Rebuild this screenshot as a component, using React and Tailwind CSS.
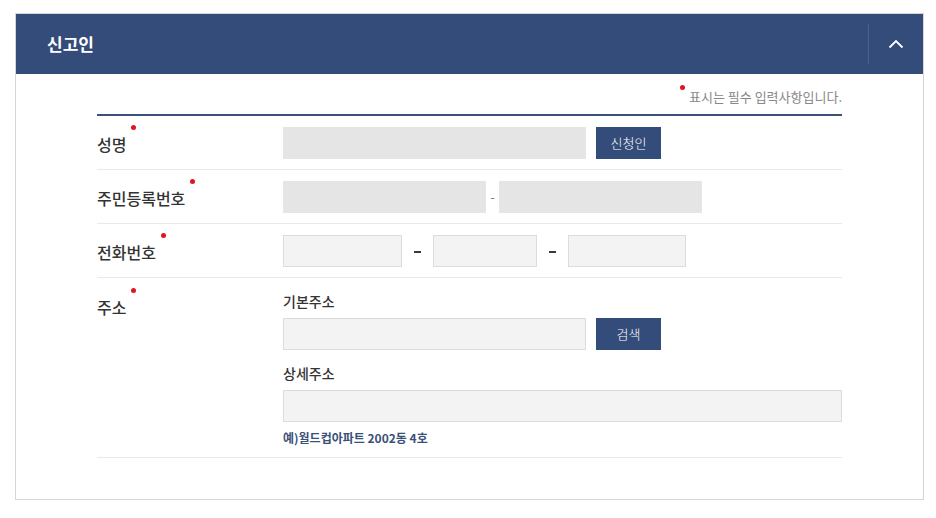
const font = { fontFamily: '"Noto Sans CJK KR", "Noto Sans", sans-serif' };

function Label({ children }) {
  return (
    <span className="relative text-[16px] font-medium text-[#333] leading-6">
      {children}
      <span className="absolute -top-[7px] -right-[10px] w-[5px] h-[5px] rounded-full bg-[#e1151f]" />
    </span>
  );
}

function Row({ label, children }) {
  return (
    <div className="flex items-center h-[54px] border-b border-[#e9e9e9]">
      <div className="w-[186px] pt-[3px]">
        <Label>{label}</Label>
      </div>
      <div className="flex items-center">{children}</div>
    </div>
  );
}

function Dash() {
  return (
    <div className="w-[31px] flex justify-center pt-[3px]">
      <div className="w-[7px] h-[2px] bg-[#3a3a3a]" />
    </div>
  );
}

export default function App() {
  return (
    <div className="pt-[13px] px-[15px] bg-white" style={font}>
      <div className="w-[909px] border border-[#d6d6d6]">
        <div className="flex items-center justify-between h-[60px] bg-[#344c79]">
          <h2 className="pl-[31px] text-[17px] font-bold text-white">신고인</h2>
          <div className="flex items-center justify-center w-[55px] h-[40px] border-l border-[#4a6290]">
            <svg width="16" height="10" viewBox="0 0 16 10" fill="none">
              <polyline points="1.5,8.5 8,2 14.5,8.5" stroke="#fff" strokeWidth="1.8" />
            </svg>
          </div>
        </div>

        <div className="px-[81px] pt-[14px] pb-[41px]">
          <p className="flex justify-end items-start text-[13px] leading-[18px] text-[#888]">
            <span className="w-[5px] h-[5px] mt-[-3px] mr-[4px] rounded-full bg-[#e1151f]" />
            표시는 필수 입력사항입니다.
          </p>
          <div className="mt-[8px] h-[2px] bg-[#3b5078]" />

          <Row label="성명">
            <div className="w-[303px] h-[32px] bg-[#e5e5e5]" />
            <button className="ml-[10px] w-[65px] h-[32px] bg-[#344c79] text-[13px] font-light text-white">
              신청인
            </button>
          </Row>

          <Row label="주민등록번호">
            <div className="w-[203px] h-[32px] bg-[#e5e5e5]" />
            <span className="w-[13px] text-center text-[12px] text-[#666]">-</span>
            <div className="w-[203px] h-[32px] bg-[#e5e5e5]" />
          </Row>

          <Row label="전화번호">
            <div className="w-[119px] h-[32px] bg-[#f3f3f3] border border-[#dcdcdc]" />
            <Dash />
            <div className="w-[104px] h-[32px] bg-[#f3f3f3] border border-[#dcdcdc]" />
            <Dash />
            <div className="w-[118px] h-[32px] bg-[#f3f3f3] border border-[#dcdcdc]" />
          </Row>

          <div className="flex border-b border-[#e9e9e9]">
            <div className="w-[186px] pt-[17px]">
              <Label>주소</Label>
            </div>
            <div className="flex-1 pt-[13px] pb-[11px]">
              <p className="text-[14px] leading-5 font-medium text-[#333]">기본주소</p>
              <div className="flex mt-[7px]">
                <div className="w-[303px] h-[32px] bg-[#f3f3f3] border border-[#dcdcdc]" />
                <button className="ml-[10px] w-[65px] h-[32px] bg-[#344c79] text-[13px] font-light text-white">
                  검색
                </button>
              </div>
              <p className="mt-[13px] text-[14px] leading-5 font-medium text-[#333]">상세주소</p>
              <div className="mt-[7px] h-[32px] bg-[#f3f3f3] border border-[#dcdcdc]" />
              <p className="mt-[8px] text-[12px] leading-4 font-bold text-[#3b5078]">
                예)월드컵아파트 2002동 4호
              </p>
            </div>
          </div>
        </div>
      </div>
    </div>
  );
}
